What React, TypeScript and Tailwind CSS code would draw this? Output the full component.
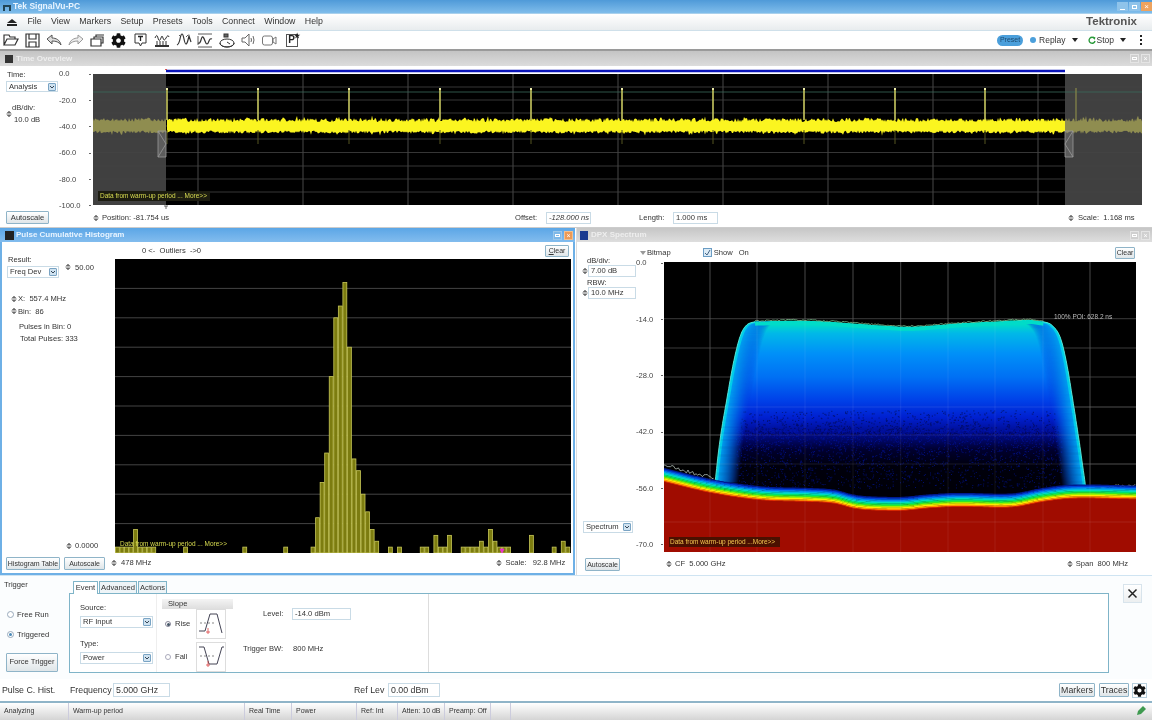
import React from "react";
import { FaCog } from "react-icons/fa";

const rng = (seed: number) => () => {
  seed |= 0;
  seed = (seed + 0x6d2b79f5) | 0;
  let t = Math.imul(seed ^ (seed >>> 15), 1 | seed);
  t = (t + Math.imul(t ^ (t >>> 7), 61 | t)) ^ t;
  return ((t ^ (t >>> 14)) >>> 0) / 4294967296;
};
const lerp = (pts: number[][], x: number) => {
  if (x <= pts[0][0]) return pts[0][1];
  for (let i = 1; i < pts.length; i++) {
    if (x <= pts[i][0]) {
      const t = (x - pts[i - 1][0]) / (pts[i][0] - pts[i - 1][0] || 1);
      return pts[i - 1][1] + (pts[i][1] - pts[i - 1][1]) * t;
    }
  }
  return pts[pts.length - 1][1];
};
const smooth = (p: number[][]) => {
  const o: number[][] = [];
  const n = p.length;
  for (let i = 0; i < n - 1; i++) {
    const a = p[Math.max(i - 1, 0)], b = p[i], c = p[i + 1], d = p[Math.min(i + 2, n - 1)];
    for (let s = 0; s < 10; s++) {
      const t = s / 10;
      const f = (k: number) =>
        0.5 * (2 * b[k] + (c[k] - a[k]) * t + (2 * a[k] - 5 * b[k] + 4 * c[k] - d[k]) * t * t + (3 * b[k] - a[k] - 3 * c[k] + d[k]) * t * t * t);
      o.push([f(0), f(1)]);
    }
  }
  o.push(p[n - 1]);
  return o;
};
const z = (p: number[][]) => smooth(p.map(([a, b]) => [a / 3 - 4, b / 3 + 38]));

// ------- Time overview data
const TW = 1049;
const bandPath = (from: number, to: number, seed: number) => {
  const r = rng(seed);
  const top: string[] = [];
  const bot: string[] = [];
  for (let x = from; x <= to; x += 1) {
    const out = r() > 0.9;
    top.push(`${x},${44 + r() * 4 - (out ? r() * 3 : 0)}`);
    bot.unshift(`${x},${56.5 + r() * 3 + (out ? r() * 2.5 : 0)}`);
  }
  return "M" + top.concat(bot).join("L") + "Z";
};
const band = bandPath(74, 972, 7);
const dimA = bandPath(0, 73, 3);
const dimB = bandPath(972, TW, 5);
const spikes = [167, 258, 349, 440, 531, 622, 713, 804, 895, 985].map((v) => v - 93);

// ------- Histogram data
const counts: Record<number, number> = {
  0: 1, 1: 1, 2: 1, 3: 1, 4: 4, 5: 1, 6: 1, 7: 1, 8: 1, 15: 1, 28: 1, 37: 1, 43: 1, 44: 6, 45: 12, 46: 17,
  47: 30, 48: 40, 49: 42, 50: 46, 51: 35, 52: 16, 53: 14, 54: 10, 55: 7, 56: 4, 57: 2, 60: 1, 62: 1, 67: 1, 68: 1,
  70: 3, 71: 1, 72: 1, 73: 3, 76: 1, 77: 1, 78: 1, 79: 1, 80: 2, 81: 1, 82: 4, 83: 2, 84: 1, 85: 1, 86: 1, 91: 3,
  96: 1, 98: 2, 99: 1,
};

// ------- DPX data
const W = 472;
const H = 290;
const red = z([[12, 545], [150, 578], [300, 600], [440, 605], [520, 610], [600, 628], [720, 632], [800, 625], [900, 620], [1050, 622], [1150, 605], [1250, 595], [1430, 598]]);
const topEnv = z([[285, 65], [400, 62], [500, 65], [600, 72], [720, 80], [800, 78], [900, 70], [1000, 65], [1100, 60], [1150, 65]]);
const leftEdge = z([[165, 548], [180, 420], [200, 300], [220, 190], [240, 110], [260, 75], [285, 65]]);
const rightEdge = z([[1150, 65], [1175, 75], [1200, 110], [1220, 190], [1240, 310], [1260, 440], [1278, 568]]);
const poly = (pts: number[][]) => pts.map((p) => `${p[0].toFixed(1)},${p[1].toFixed(1)}`).join(" ");
const sample = (f: (x: number) => number, a: number, b: number, dy = 0) => {
  const o: number[][] = [];
  for (let x = a; x <= b; x += 2) o.push([x, f(x) + dy]);
  return o;
};
const R = (x: number) => lerp(red, x);
const dpxEdge = [...leftEdge, ...topEnv.slice(1), ...rightEdge.slice(1)];
const bodyPts = [...dpxEdge, ...sample(R, leftEdge[0][0], rightEdge[rightEdge.length - 1][0], -8).reverse()];
const bandColors = ["#001a90", "#0040d8", "#0078f0", "#00b0e8", "#00dcc0", "#00e070", "#30e828", "#a0f000", "#ffe800", "#ff9800", "#e83000"];
const dots = (() => {
  const r = rng(11);
  let blue = "";
  let dark = "";
  for (let i = 0; i < 2600; i++) {
    const x = 72 + r() * 326;
    const f = r();
    const y = 168 + f * f * 58;
    if (y < R(x) - 14) blue += `M${x.toFixed(1)} ${y.toFixed(1)}h1v1h-1z`;
  }
  for (let i = 0; i < 1000; i++) {
    const x = 76 + r() * 318;
    const f = r();
    const y = 172 - f * f * 24;
    dark += `M${x.toFixed(1)} ${y.toFixed(1)}h1.2v1.2h-1.2z`;
  }
  return { blue, dark };
})();
const noiseLine = (pts: number[][], a: number, b: number, seed: number, amp: number) => {
  const r = rng(seed);
  const o: number[][] = [];
  for (let x = a; x <= b; x += 1.6) o.push([x, lerp(pts, x) - r() * amp]);
  return poly(o);
};
const mix = (t: number) => {
  const g = Math.round(168 - 104 * t);
  const b = Math.round(240 - 16 * t);
  return `rgb(0,${g},${b})`;
};

// ------- small widgets
const Diamond = ({ className = "" }: { className?: string }) => (
  <svg width="6" height="6" viewBox="0 0 6 6" className={"shrink-0 " + className}>
    <path d="M3 0L5 2H1Z M3 6L5 4H1Z M0 3H6" fill="#666" stroke="#777" strokeWidth="0.6" />
  </svg>
);
const Btn = ({ children, className = "" }: { children: React.ReactNode; className?: string }) => (
  <div className={"flex items-center justify-center whitespace-nowrap rounded-[1px] border border-[#8fb4c8] bg-gradient-to-b from-white to-[#dfe5e8] text-[#333] " + className}>
    {children}
  </div>
);
const Sel = ({ label, className = "" }: { label: string; className?: string }) => (
  <div className={"flex items-center justify-between border border-[#c9dbe6] bg-white pl-[2px] pr-[1px] " + className}>
    <span>{label}</span>
    <span className="flex h-[8px] w-[8px] items-center justify-center rounded-[1px] border border-[#7aa4c4] bg-[#cfe2f0]">
      <svg width="6" height="4" viewBox="0 0 6 4"><path d="M1 1L3 3L5 1" fill="none" stroke="#345" strokeWidth="1" /></svg>
    </span>
  </div>
);
const Field = ({ children, className = "" }: { children: React.ReactNode; className?: string }) => (
  <div className={"flex items-center whitespace-nowrap border border-[#c9dbe6] bg-white pl-[2px] " + className}>{children}</div>
);
const WinBtns = ({ active }: { active?: boolean }) => (
  <div className="ml-auto flex gap-[2px] pr-[2px]">
    <div className={"flex h-[9px] w-[9px] items-center justify-center border " + (active ? "border-[#9cc8ea] bg-[#7db8e8]" : "border-[#e4e4e4] bg-[#d0d0d0]")}>
      <div className="h-[3px] w-[5px] border border-white" />
    </div>
    <div className={"flex h-[9px] w-[9px] items-center justify-center border text-[7px] leading-none text-white " + (active ? "border-[#f0c090] bg-[#ec9a55]" : "border-[#e4e4e4] bg-[#d0d0d0]")}>×</div>
  </div>
);
const Axis = ({ labels, tickMl, className = "" }: { labels: string[]; tickMl: string; className?: string }) => (
  <div className={"flex flex-col justify-between " + className}>
    {labels.map((l) => (
      <div key={l} className="flex h-0 items-center">
        <span className="w-[1px] whitespace-nowrap text-[#444]">{l}</span>
        <span className={"h-[1px] w-[2px] bg-[#666] " + tickMl} />
      </div>
    ))}
  </div>
);

const S = { fill: "none", stroke: "#333", strokeWidth: 1.2 } as const;
const toolIcons: React.ReactNode[] = [
  <svg width="16" height="14" viewBox="0 0 16 14" {...S}><path d="M1 12V2h5l1 2h5v2M1 12l3-6h11l-3 6Z" /></svg>,
  <svg width="15" height="15" viewBox="0 0 15 15" {...S}><path d="M1 1h13v13H1Z M4 1v5h7V1 M4 14V9h7v5" /></svg>,
  <svg width="16" height="12" viewBox="0 0 16 12" fill="#ddd" stroke="#555" strokeWidth="1"><path d="M1 5L6 1v3c4 0 8 2 9 7-2-3-5-4-9-4v3Z" /></svg>,
  <svg width="16" height="12" viewBox="0 0 16 12" fill="#eee" stroke="#999" strokeWidth="1"><path d="M15 5L10 1v3C6 4 2 6 1 11c2-3 5-4 9-4v3Z" /></svg>,
  <svg width="15" height="13" viewBox="0 0 15 13" {...S}><path d="M1 5h10v7H1Z M4 5V3h9v6h-2 M6 3V1h8" /></svg>,
  <FaCog size={15} color="#111" />,
  <svg width="13" height="14" viewBox="0 0 13 14"><path d="M1 1h11v9H8l-1.5 3L5 10H1Z" fill="none" stroke="#333" /><path d="M4 3.5h5M6.5 3.5V8" stroke="#222" strokeWidth="1.3" /></svg>,
  <svg width="16" height="16" viewBox="0 0 16 16" {...S} strokeWidth={1}><path d="M1 6q2-5 3 0t3 0q1-4 2 0t3 0 3-1" /><path d="M3 9v4M6 9v4M9 9v4M12 9v4" /><path d="M1 14h14" strokeWidth={2} /></svg>,
  <svg width="16" height="14" viewBox="0 0 16 14" {...S}><path d="M1 12q2-1 3-6t2-5 2 5 2 5 2-4 1-4 2 6" /><path d="M3 2l2 2M12 2l-2 2" strokeWidth={0.8} /></svg>,
  <svg width="16" height="15" viewBox="0 0 16 15" {...S}><path d="M1 1h14M1 14h14" strokeWidth={0.8} /><path d="M1 10q2 1 3-3t2-3 2 4 2 3 2-3 3-2" /><path d="M1 3v9" strokeWidth={0.8} /></svg>,
  <svg width="16" height="15" viewBox="0 0 16 15" {...S} strokeWidth={1}><ellipse cx="8" cy="10" rx="7" ry="4" /><path d="M1 10v1c1 2 4 3 7 3s6-1 7-3v-1" /><path d="M8 9l3 2" /><rect x="5" y="1" width="4" height="3" fill="#666" /></svg>,
  <svg width="15" height="14" viewBox="0 0 15 14" {...S} stroke="#666" strokeWidth={1}><path d="M1 5v4h3l4 4V1L4 5Z" /><path d="M10 5q1 2 0 4M12 3q2 4 0 8" /></svg>,
  <svg width="15" height="11" viewBox="0 0 15 11" {...S} stroke="#777" strokeWidth={1}><rect x="0.5" y="1" width="10" height="9" rx="2" /><path d="M11 4l3-2v7l-3-2Z" /></svg>,
  <div className="relative flex h-[13px] w-[12px] items-center justify-center border border-[#555] bg-white text-[10px] font-bold leading-none text-[#222]">P<span className="absolute -right-[3px] -top-[3px] text-[7px] leading-none">★</span></div>,
];

const RiseIcon = ({ fall }: { fall?: boolean }) => (
  <div className="flex h-[30px] w-[30px] items-center justify-center border border-[#ddd] bg-white">
    <svg width="28" height="28" viewBox="0 0 28 28" fill="none">
      <path d={fall ? "M2 4h5l5 17h8l5-17h2" : "M2 21h6l5-17h7l5 19"} stroke="#445" strokeWidth="1" />
      <path d="M3 13h16" stroke="#555" strokeWidth="0.7" strokeDasharray="2 2" />
      <path d="M11 18v6M9 22h4" stroke="#d44" strokeWidth="0.8" />
    </svg>
  </div>
);

const STATUS: [string, string][] = [
  ["Analyzing", "w-[69px]"], ["Warm-up period", "w-[176px]"], ["Real Time", "w-[47px]"], ["Power", "w-[65px]"],
  ["Ref: Int", "w-[41px]"], ["Atten: 10 dB", "w-[47px]"], ["Preamp: Off", "w-[46px]"], ["", "w-[20px]"],
];

export default function App() {
  return (
    <div className="flex h-[720px] w-[1152px] flex-col overflow-hidden bg-white font-['Liberation_Sans',sans-serif] text-[#333] blur-[0.4px]">
      {/* Title bar */}
      <div className="flex h-[13px] shrink-0 items-center bg-gradient-to-b from-[#4f9ad8] to-[#7fbdeb] pl-[3px]">
        <svg width="8" height="8" viewBox="0 0 8 8" className="mr-[2px]"><path d="M0 2h8v6H6V4H2v4H0Z" fill="#245" /></svg>
        <span className="text-[8.5px] font-bold leading-none text-[#e8f4ff]">Tek SignalVu-PC</span>
        <div className="ml-auto flex gap-[1px]">
          <div className="flex h-[9px] w-[11px] items-end justify-center bg-[#8fc3ea] pb-[1px]"><div className="h-[1px] w-[5px] bg-white" /></div>
          <div className="flex h-[9px] w-[11px] items-center justify-center bg-[#8fc3ea]"><div className="h-[4px] w-[5px] border border-white" /></div>
          <div className="flex h-[9px] w-[11px] items-center justify-center bg-[#eda35f] text-[8px] leading-none text-white">×</div>
        </div>
      </div>
      {/* Menu */}
      <div className="flex h-[17px] shrink-0 items-center gap-[9.4px] border-t border-[#a9d0ec] bg-gradient-to-b from-white to-[#e8ecee] pl-[7px] text-[8.8px] text-[#333]">
        <svg width="10" height="7" viewBox="0 0 10 7" className="mr-[1px]"><path d="M5 0L10 4H0Z M0 5h10v2H0Z" fill="#222" /></svg>
        {["File", "View", "Markers", "Setup", "Presets", "Tools", "Connect", "Window", "Help"].map((m) => (
          <span key={m}>{m}</span>
        ))}
        <span className="ml-auto pr-[15px] text-[11.5px] font-bold leading-none text-[#555]">Tektronix</span>
      </div>
      {/* Toolbar */}
      <div className="flex h-[21px] shrink-0 items-center border-t border-[#cfe0ea] border-b-2 border-b-[#9a9a9a] bg-white text-[8.5px]">
        {toolIcons.map((ic, i) => (
          <div key={i} className="flex w-[21.6px] items-center justify-center">{ic}</div>
        ))}
        <div className="ml-auto flex items-center pr-[10px]">
          <div className="mr-[7px] flex h-[11px] w-[26px] items-center justify-center rounded-full bg-[#4b9fdb] text-[7px] text-[#1b4a70]">Preset</div>
          <span className="mr-[3px] h-[6px] w-[6px] rounded-full bg-[#4b9fdb]" />
          <span className="mr-[6px]">Replay</span>
          <span className="mr-[10px] h-0 w-0 border-x-[3px] border-t-[4px] border-x-transparent border-t-[#222]" />
          <svg width="8" height="9" viewBox="0 0 8 9" className="mr-[1px]"><path d="M6.5 2.5A3 3 0 1 0 7 5" fill="none" stroke="#2a9a3a" strokeWidth="1.4" /><path d="M5 0.5L7.5 1.5 6.5 4Z" fill="#2a9a3a" /></svg>
          <span className="mr-[6px]">Stop</span>
          <span className="mr-[14px] h-0 w-0 border-x-[3px] border-t-[4px] border-x-transparent border-t-[#222]" />
          <div className="flex flex-col gap-[2px]"><span className="h-[2px] w-[2px] bg-[#222]" /><span className="h-[2px] w-[2px] bg-[#222]" /><span className="h-[2px] w-[2px] bg-[#222]" /></div>
        </div>
      </div>

      {/* Time overview */}
      <div className="flex h-[177px] shrink-0 flex-col border-b border-[#ccc] bg-white text-[7.6px] leading-none">
        <div className="flex h-[15px] shrink-0 items-center bg-gradient-to-b from-[#c4c4c4] to-[#dcdcdc] pl-[5px]">
          <span className="mr-[3px] h-[8px] w-[8px] bg-[#333]" />
          <span className="text-[8px] font-bold text-[#eee]">Time Overview</span>
          <WinBtns />
        </div>
        <div className="flex h-[139px] shrink-0">
          <div className="w-[59px] pl-[6px] pt-[5px]">
            <div className="ml-[1px] h-[10px]">Time:</div>
            <Sel label="Analysis" className="h-[11px] w-[52px]" />
            <div className="ml-[6px] mt-[12px]">dB/div:</div>
            <div className="flex items-start"><Diamond className="mt-[-1px]" /><span className="ml-[2px] mt-[4px]">10.0 dB</span></div>
          </div>
          <Axis labels={["0.0", "-20.0", "-40.0", "-60.0", "-80.0", "-100.0"]} tickMl="ml-[29px]" className="mt-[8px] h-[132px] w-[34px]" />
          <div className="mt-[8px] h-[131px] w-[1049px] shrink-0">
            <svg width={TW} height="131" viewBox={`0 0 ${TW} 131`} className="block overflow-visible">
              <rect width={TW} height="131" fill="#000" />
              <path d="M73-3H972" stroke="#0a14b8" strokeWidth="2.4" />
              <path d="M73-5v1" stroke="#c22" strokeWidth="1.5" />
              <rect width="73" height="131" fill="#404040" />
              <rect x="972" width="77" height="131" fill="#404040" />
              {[105, 210, 315, 420, 525, 630, 735, 840, 945].map((x) => <path key={x} d={`M${x} 0V131`} stroke="#5a5a5a" strokeWidth="0.8" />)}
              {[13, 26, 39, 52, 65, 78.5, 92, 105, 118].map((y) => <path key={y} d={`M0 ${y}H${TW}`} stroke="#444" strokeWidth="0.8" />)}
              <path d={`M0 18H${TW}`} stroke="#3a6a5a" strokeWidth="0.8" />
              <path d={band} fill="#fbf520" />
              <path d={dimA} fill="#8f8d50" />
              <path d={dimB} fill="#8f8d50" />
              {spikes.map((x) => (
                <g key={x}>
                  <path d={`M${x} 14V46`} stroke="#c8c860" strokeWidth="1.6" />
                  <path d={`M${x} 14v2`} stroke="#ffffc0" strokeWidth="1.6" />
                  <path d={`M${x} 56v14`} stroke="#555520" strokeWidth="1" />
                </g>
              ))}
              <path d="M983 14V46" stroke="#7f7f48" strokeWidth="1.4" />
              <path d="M65 57h8v26h-8Z M65 57l8 13-8 13" fill="#888" fillOpacity="0.4" stroke="#999" strokeWidth="0.8" />
              <path d="M980 57h-8v26h8Z M980 57l-8 13 8 13" fill="#888" fillOpacity="0.4" stroke="#999" strokeWidth="0.8" />
              <path d="M71 132h4M73 132v3" stroke="#444" strokeWidth="0.8" />
            </svg>
            <div className="relative -mt-[14px] ml-[5px] h-[10px] w-[112px] bg-[#1c1c10] px-[2px] text-[6.5px] leading-[10px] text-[#d8dc50]">Data from warm-up period ... More&gt;&gt;</div>
          </div>
        </div>
        <div className="ml-[6px] mt-[6px] flex h-[13px] items-center">
          <Btn className="h-[13px] w-[43px]">Autoscale</Btn>
          <Diamond className="ml-[44px]" />
          <span className="ml-[3px] w-[413px] whitespace-nowrap">Position: -81.754 us</span>
          <span className="w-[31px]">Offset:</span>
          <Field className="h-[12px] w-[45px] italic">-128.000 ns</Field>
          <span className="ml-[48px] w-[34px]">Length:</span>
          <Field className="h-[12px] w-[45px]">1.000 ms</Field>
          <Diamond className="ml-[350px]" />
          <span className="ml-[4px] whitespace-nowrap">Scale:&nbsp;&nbsp;1.168 ms</span>
        </div>
      </div>

      {/* Two windows */}
      <div className="flex h-[347px] shrink-0 text-[7.6px] leading-none">
        {/* Histogram */}
        <div className="flex w-[575px] shrink-0 flex-col border-x-2 border-b-2 border-[#6eb0e6] bg-white">
          <div className="-mx-[2px] flex h-[14px] shrink-0 items-center bg-gradient-to-b from-[#5ba6e6] to-[#82bcee] pl-[5px]">
            <span className="mr-[2px] h-[9px] w-[9px] bg-[#222]" />
            <span className="text-[8px] font-bold text-[#e8f4ff]">Pulse Cumulative Histogram</span>
            <WinBtns active />
          </div>
          <div className="flex h-[311px] shrink-0">
            <div className="flex w-[113px] shrink-0 flex-col pl-[5px] pt-[14px]">
              <div className="ml-[1px] h-[10px]">Result:</div>
              <div className="flex items-start">
                <Sel label="Freq Dev" className="h-[12px] w-[52px]" />
                <Diamond className="ml-[6px] mt-[-2px]" />
                <span className="ml-[4px] mt-[-2px] text-[7.6px]">50.00</span>
              </div>
              <div className="ml-[4px] mt-[17px] flex items-center"><Diamond /><span className="ml-[1px]">X:&nbsp;&nbsp;557.4 MHz</span></div>
              <div className="ml-[4px] mt-[5px] flex items-center"><Diamond /><span className="ml-[1px]">Bin:&nbsp;&nbsp;86</span></div>
              <div className="ml-[12px] mt-[8px]">Pulses in Bin: 0</div>
              <div className="ml-[13px] mt-[4px]">Total Pulses: 333</div>
              <div className="mb-[3px] ml-[59px] mt-auto flex items-center"><Diamond /><span className="ml-[3px]">0.0000</span></div>
            </div>
            <div className="flex w-[456px] shrink-0 flex-col">
              <div className="flex h-[17px] shrink-0 items-center">
                <span className="ml-[27px]">0 &lt;-&nbsp;&nbsp;Outliers&nbsp;&nbsp;-&gt;0</span>
                <Btn className="ml-auto mr-[2px] h-[12px] w-[24px] text-[7px]"><u>C</u>lear</Btn>
              </div>
              <div className="h-[294px] shrink-0">
                <svg width="456" height="294" viewBox="0 0 456 294" className="block">
                  <rect width="456" height="294" fill="#000" />
                  {Array.from({ length: 9 }, (_, i) => (i + 1) * 29.4).map((y) => <path key={y} d={`M0 ${y}H456`} stroke="#555" strokeWidth="0.8" />)}
                  {Object.entries(counts).map(([k, c]) => {
                    const i = Number(k);
                    const h = c * 5.88;
                    return <rect key={k} x={i * 4.55 + 0.4} y={294 - h} width="3.9" height={h} fill="#7c7c10" stroke="#c8c858" strokeWidth="0.8" />;
                  })}
                  <path d="M387 292v-2M387 294l-2-4h4Z" fill="#f030d0" stroke="#f030d0" strokeWidth="0.8" />
                </svg>
                <div className="relative -mt-[14px] ml-[5px] h-[9px] w-[112px] text-[6.5px] leading-[9px] text-[#d8dc50]">Data from warm-up period ... More&gt;&gt;</div>
              </div>
            </div>
          </div>
          <div className="flex flex-1 items-center pl-[4px]">
            <Btn className="h-[13px] w-[54px] text-[7px]">Histogram Table</Btn>
            <Btn className="ml-[4px] h-[13px] w-[41px] text-[7px]">Autoscale</Btn>
            <Diamond className="ml-[6px]" />
            <span className="ml-[4px] whitespace-nowrap">478 MHz</span>
            <Diamond className="ml-[345px]" />
            <span className="ml-[3px] whitespace-nowrap">Scale:&nbsp;&nbsp;&nbsp;92.8 MHz</span>
          </div>
        </div>
        {/* DPX */}
        <div className="ml-[1px] flex w-[576px] shrink-0 flex-col border-l border-[#ddd] bg-white">
          <div className="flex h-[14px] shrink-0 items-center bg-gradient-to-b from-[#c6c6c6] to-[#dedede] pl-[3px]">
            <span className="mr-[3px] h-[9px] w-[8px] bg-[#1a3a90]" />
            <span className="text-[8px] font-bold text-[#eee]">DPX Spectrum</span>
            <WinBtns />
          </div>
          <div className="flex h-[311px] shrink-0">
            <div className="flex w-[59px] shrink-0 flex-col pl-[5px] pt-[15px]">
              <div className="ml-[5px] h-[8px]">dB/div:</div>
              <div className="flex items-center"><Diamond /><Field className="h-[12px] w-[48px]">7.00 dB</Field></div>
              <div className="ml-[5px] mt-[2px] h-[8px]">RBW:</div>
              <div className="flex items-center"><Diamond /><Field className="h-[12px] w-[48px]">10.0 MHz</Field></div>
              <Sel label="Spectrum" className="mb-[20px] ml-[1px] mt-auto h-[12px] w-[50px]" />
            </div>
            <Axis labels={["0.0", "-14.0", "-28.0", "-42.0", "-56.0", "-70.0"]} tickMl="ml-[24px]" className="mt-[21px] h-[282px] w-[28px] shrink-0" />
            <div className="flex w-[472px] shrink-0 flex-col">
              <div className="flex h-[20px] shrink-0 items-center pt-[1px]">
                <svg width="6" height="4" viewBox="0 0 6 4" className="-ml-[24px]"><path d="M0 0h6L3 4Z" fill="#999" /></svg>
                <span className="ml-[1px]">Bitmap</span>
                <span className="ml-[32px] flex h-[9px] w-[9px] items-center justify-center border border-[#6a9cc4] bg-[#dcebf6]"><svg width="7" height="7" viewBox="0 0 7 7"><path d="M1 4l2 2 3-5" fill="none" stroke="#357" strokeWidth="0.9" /></svg></span>
                <span className="ml-[2px]">Show</span>
                <span className="ml-[6px]">On</span>
                <Btn className="ml-auto mr-[1px] h-[12px] w-[20px] text-[7px]">Clear</Btn>
              </div>
              <div className="h-[290px] shrink-0">
                <svg width={W} height={H} viewBox={`0 0 ${W} ${H}`} className="block">
                  <defs>
                    <linearGradient id="body" gradientUnits="userSpaceOnUse" x1="0" y1="58" x2="0" y2="226">
                      <stop offset="0" stopColor="#30e0a0" />
                      <stop offset="0.025" stopColor="#00dcc8" />
                      <stop offset="0.08" stopColor="#00b8e8" />
                      <stop offset="0.2" stopColor="#0090f8" />
                      <stop offset="0.34" stopColor="#0070f4" />
                      <stop offset="0.48" stopColor="#0040e8" />
                      <stop offset="0.58" stopColor="#0020d0" />
                      <stop offset="0.67" stopColor="#000c90" />
                      <stop offset="0.77" stopColor="#000030" />
                      <stop offset="0.87" stopColor="#00000c" />
                      <stop offset="1" stopColor="#000008" />
                    </linearGradient>
                    <clipPath id="bodyClip"><polygon points={poly(bodyPts)} /></clipPath>
                  </defs>
                  <rect width={W} height={H} fill="#000" />
                  {[46, 93, 141, 189, 236.7, 284, 331, 379, 426].map((x) => <path key={x} d={`M${x} 0V${H}`} stroke="#4a4a4a" strokeWidth="0.8" />)}
                  {[56.7, 86, 115, 145, 173, 202, 231, 260].map((y) => <path key={y} d={`M0 ${y}H${W}`} stroke="#4a4a4a" strokeWidth="0.8" />)}
                  <polyline points={noiseLine(z([[12, 500], [80, 520], [165, 540]]), 0, 51, 21, 4)} fill="none" stroke="#c8d8d0" strokeWidth="0.7" />
                  <polyline points={noiseLine(z([[1280, 565], [1430, 560]]), 423, 472, 22, 3)} fill="none" stroke="#c8d8d0" strokeWidth="0.7" />
                  <polygon points={poly(bodyPts)} fill="url(#body)" />
                  <g clipPath="url(#bodyClip)">
                    <path d={dots.dark} fill="#000018" opacity="0.4" />
                    <path d={dots.blue} fill="#0018b8" opacity="0.55" />
                    {Array.from({ length: 25 }, (_, k) => k).reverse().map((k) => {
                      const t = k / 24;
                      const c = t < 0.12 ? "#00d0e8" : mix(t);
                      return (
                        <g key={k} opacity={1 - Math.pow(t, 1.5)}>
                          <polyline points={poly(leftEdge.map(([x, y]) => [x + k, y]))} fill="none" stroke={c} strokeWidth="1.5" />
                          <polyline points={poly(rightEdge.map(([x, y]) => [x - k, y]))} fill="none" stroke={c} strokeWidth="1.5" />
                        </g>
                      );
                    })}
                    <polyline points={poly(topEnv.map(([x, y]) => [x, y + 2]))} fill="none" stroke="#00dcc8" strokeWidth="4" />
                  </g>
                  <polyline points={noiseLine(topEnv, topEnv[0][0], topEnv[topEnv.length - 1][0], 31, 1.4)} fill="none" stroke="#8fd8a0" strokeWidth="0.7" />
                  <polyline points={poly(leftEdge)} fill="none" stroke="#60e8d0" strokeWidth="0.9" />
                  <polyline points={poly(rightEdge)} fill="none" stroke="#60e8d0" strokeWidth="0.9" />
                  {bandColors.map((c, i) => (
                    <polyline key={c} points={poly(sample(R, 0, W, -13 + i * 1.3))} fill="none" stroke={c} strokeWidth="1.6" />
                  ))}
                  <polygon points={poly([...sample(R, 0, W), [W, H], [0, H]])} fill="#a00c00" />
                  {[46, 93, 141, 189, 236.7, 284, 331, 379, 426].map((x) => <path key={x} d={`M${x} 0V${H}`} stroke="#fff" strokeOpacity="0.09" strokeWidth="0.8" />)}
                  {[145, 173, 202, 260].map((y) => <path key={y} d={`M0 ${y}H${W}`} stroke="#fff" strokeOpacity="0.12" strokeWidth="0.8" />)}
                </svg>
                <div className="relative -mt-[15px] ml-[5px] h-[10px] w-[111px] bg-[#4a1000] px-[1px] text-[6.5px] leading-[10px] text-[#f4c850]">Data from warm-up period ...More&gt;&gt;</div>
                <div className="relative -mt-[235px] ml-[390px] h-[9px] text-[6.5px] leading-[9px] text-[#bbb]">100% POI: 628.2 ns</div>
              </div>
            </div>
          </div>
          <div className="flex flex-1 items-center pl-[8px]">
            <Btn className="h-[13px] w-[35px] text-[7px]">Autoscale</Btn>
            <Diamond className="ml-[46px]" />
            <span className="ml-[3px] whitespace-nowrap">CF&nbsp;&nbsp;5.000 GHz</span>
            <Diamond className="ml-[341px]" />
            <span className="ml-[3px] whitespace-nowrap">Span&nbsp;&nbsp;800 MHz</span>
          </div>
        </div>
      </div>

      {/* Trigger */}
      <div className="flex h-[104px] shrink-0 border-t border-[#cfe4f2] bg-[#fbfdfe] text-[7.6px] leading-none">
        <div className="flex w-[69px] shrink-0 flex-col pl-[4px] pt-[5px]">
          <span>Trigger</span>
          <div className="ml-[3px] mt-[22px] flex items-center gap-[3px]"><span className="h-[7px] w-[7px] rounded-full border border-[#9ab] bg-white" />Free Run</div>
          <div className="ml-[3px] mt-[13px] flex items-center gap-[3px]"><span className="flex h-[7px] w-[7px] items-center justify-center rounded-full border border-[#9ab] bg-white"><span className="h-[3px] w-[3px] rounded-full bg-[#4a8ab8]" /></span>Triggered</div>
          <Btn className="ml-[2px] mt-[14px] h-[19px] w-[52px]">Force Trigger</Btn>
        </div>
        <div className="flex w-[1040px] shrink-0 flex-col pt-[5px]">
          <div className="ml-[4px] flex h-[12px] items-end gap-[1px]">
            <div className="relative top-[1px] flex h-[13px] w-[25px] items-center justify-center rounded-t-[1px] border border-b-0 border-[#7fb4c8] bg-white">Event</div>
            <div className="flex h-[12px] w-[38px] items-center justify-center border border-b-0 border-[#7fb4c8] bg-[#eef4f7]">Advanced</div>
            <div className="flex h-[12px] w-[29px] items-center justify-center border border-b-0 border-[#7fb4c8] bg-[#eef4f7]">Actions</div>
          </div>
          <div className="flex h-[80px] border border-[#7fb4c8] bg-white">
            <div className="flex w-[87px] shrink-0 flex-col border-r border-[#eee] pl-[10px] pt-[10px]">
              <span className="h-[12px]">Source:</span>
              <Sel label="RF Input" className="h-[12px] w-[73px]" />
              <span className="mt-[12px] h-[12px]">Type:</span>
              <Sel label="Power" className="h-[12px] w-[73px]" />
            </div>
            <div className="ml-[5px] flex w-[71px] shrink-0 flex-col pt-[5px]">
              <div className="flex h-[10px] items-center bg-gradient-to-b from-[#f4f4f4] to-[#dedede] pl-[6px]">Slope</div>
              <div className="flex items-center pl-[3px]">
                <span className="flex h-[6px] w-[6px] items-center justify-center rounded-full border border-[#889] bg-white"><span className="h-[3px] w-[3px] rounded-full bg-[#456]" /></span>
                <span className="ml-[4px] w-[21px]">Rise</span>
                <RiseIcon />
              </div>
              <div className="mt-[3px] flex items-center pl-[3px]">
                <span className="h-[6px] w-[6px] rounded-full border border-[#aab] bg-white" />
                <span className="ml-[4px] w-[21px]">Fall</span>
                <RiseIcon fall />
              </div>
            </div>
            <div className="flex w-[196px] shrink-0 flex-col border-r border-[#ddd] pt-[14px]">
              <div className="flex items-center"><span className="ml-[30px] w-[29px]">Level:</span><Field className="h-[12px] w-[59px]">-14.0 dBm</Field></div>
              <div className="mt-[25px] flex items-center"><span className="ml-[10px] w-[49px]">Trigger BW:</span><span className="ml-[1px]">800 MHz</span></div>
            </div>
          </div>
        </div>
        <div className="flex flex-1 items-start justify-center pl-[4px] pt-[8px]">
          <div className="flex h-[19px] w-[19px] items-center justify-center border border-[#d8e4ec] bg-gradient-to-b from-white to-[#eceff0]">
            <svg width="11" height="11" viewBox="0 0 11 11"><path d="M1.5 1.5l8 8M9.5 1.5l-8 8" stroke="#222" strokeWidth="1.5" /></svg>
          </div>
        </div>
      </div>

      {/* Frequency row */}
      <div className="flex h-[22px] shrink-0 items-center pl-[2px] text-[8.8px] leading-none">
        <span className="w-[68px] whitespace-nowrap">Pulse C. Hist.</span>
        <span className="w-[43px]">Frequency</span>
        <Field className="h-[14px] w-[57px]">5.000 GHz</Field>
        <span className="ml-[184px] w-[34px] whitespace-nowrap">Ref Lev</span>
        <Field className="h-[14px] w-[52px]">0.00 dBm</Field>
        <Btn className="ml-auto mr-[4px] h-[14px] w-[36px]">Markers</Btn>
        <Btn className="mr-[3px] h-[14px] w-[30px]">Traces</Btn>
        <div className="mr-[5px] flex h-[15px] w-[15px] items-center justify-center border border-[#b8cfdc]"><FaCog size={13} color="#111" /></div>
      </div>

      {/* Status */}
      <div className="flex flex-1 items-stretch border-t-2 border-[#8fb4c8] bg-gradient-to-b from-white to-[#d4d4d4] text-[7px] leading-none">
        {STATUS.map(([t, w], i) => (
          <div key={i} className={"flex items-center whitespace-nowrap border-r border-[#ccd] pb-[2px] pl-[4px] " + w}>{t}</div>
        ))}
        <svg width="10" height="10" viewBox="0 0 10 10" className="ml-auto mr-[6px] mt-[3px]"><path d="M1 9l1-4 5-5 3 3-5 5Z" fill="#3f9a50" /></svg>
      </div>
    </div>
  );
}
